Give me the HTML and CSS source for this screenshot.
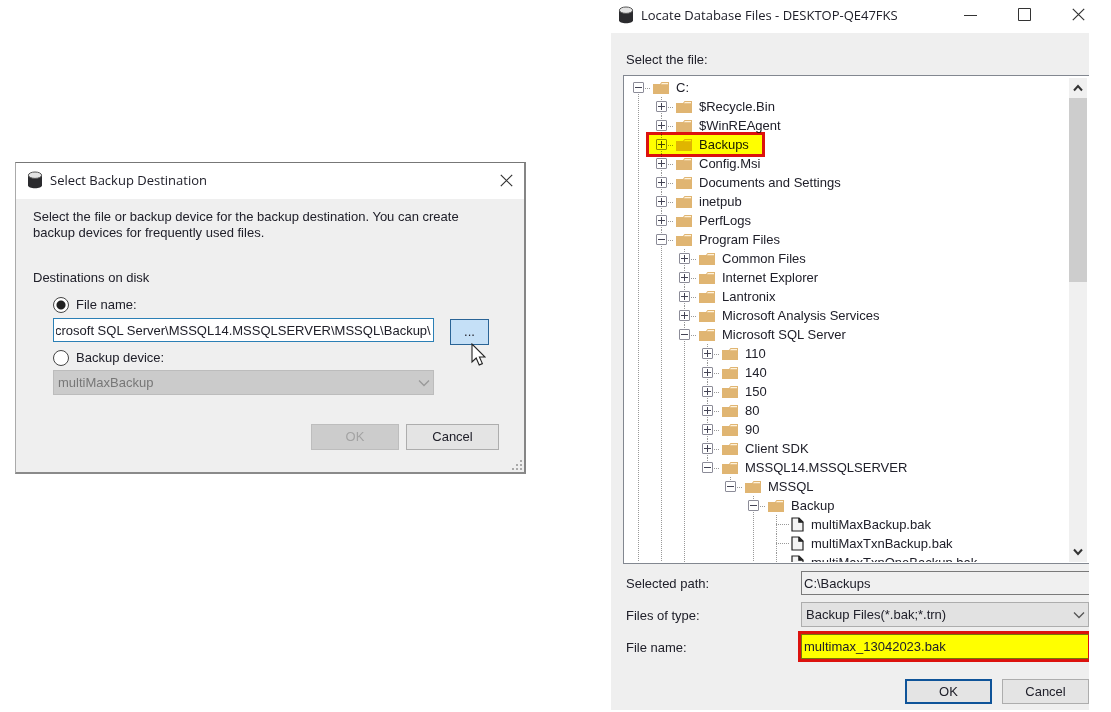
FILE: index.html
```html
<!DOCTYPE html>
<html lang="en">
<head>
<meta charset="utf-8">
<title>Select Backup Destination</title>
<link rel="stylesheet" href="styles.css">
</head>
<body>
<svg class="defs" aria-hidden="true">
  <symbol id="db" viewBox="0 0 16 18">
    <path d="M1 4v10.500c0 1.600 3.100 2.800 7 2.800s7-1.200 7-2.800V4z" fill="#2b2b2e"/>
    <ellipse cx="8" cy="4.200" rx="6.600" ry="3.200" fill="#e4e4e4" stroke="#555" stroke-width="1"/>
  </symbol>
  <symbol id="folder" viewBox="0 0 16 14">
    <path d="M0 3h7L8.500 1H16v12H0z" fill="#e0b572"/>
    <path d="M8.800 2H15v1.200H8z" fill="#fff3dc"/>
  </symbol>
  <symbol id="file" viewBox="0 0 13 15">
    <path d="M1 1h7l4 4v9H1z" fill="#f4f4f4" stroke="#222" stroke-width="1.200"/>
    <path d="M7.500 1v4.500H12z" fill="#222" stroke="#222" stroke-width=".6"/>
  </symbol>
  <symbol id="close" viewBox="0 0 13 13">
    <path d="M.8.8l11.400 11.400M12.200.8L.8 12.200" fill="none" stroke="#333" stroke-width="1.200"/>
  </symbol>
  <symbol id="chevron" viewBox="0 0 12 8">
    <path d="M1 1.500l5 5 5-5" fill="none" stroke="currentColor" stroke-width="1.300"/>
  </symbol>
  <symbol id="arrow" viewBox="0 0 10 8">
    <path d="M1 6.500l4-4.500 4 4.500" fill="none" stroke="#333" stroke-width="2"/>
  </symbol>
</svg>

<main class="stage">
  <section class="dialog dialog-backup" aria-labelledby="backup-title">
    <header class="titlebar">
      <svg class="app-icon"><use href="#db"/></svg>
      <h1 class="title" id="backup-title">Select Backup Destination</h1>
      <button class="winbtn" type="button" aria-label="Close"><svg class="x-icon"><use href="#close"/></svg></button>
    </header>
    <form class="backup-body">
      <p class="intro">Select the file or backup device for the backup destination. You can create<br>backup devices for frequently used files.</p>
      <h2 class="group-title">Destinations on disk</h2>
      <div class="dest">
        <label class="choice"><input class="radio" type="radio" name="dest" checked>File name:</label>
        <input class="field path" id="path" type="text" aria-label="File name" value="crosoft SQL Server\MSSQL14.MSSQLSERVER\MSSQL\Backup\">
        <div class="browse-wrap">
          <button class="btn browse" type="button" aria-label="Browse">...</button>
          <svg class="cursor" viewBox="0 0 15 23" aria-hidden="true"><path d="M1 1v18l4.200-4 3 7 3.200-1.400-3-6.600H14z" fill="#fff" stroke="#222" stroke-width="1.100"/></svg>
        </div>
        <label class="choice second"><input class="radio" type="radio" name="dest">Backup device:</label>
        <div class="combo device">
          <select class="select" aria-label="Backup device" disabled><option>multiMaxBackup</option></select>
          <svg class="combo-arrow"><use href="#chevron"/></svg>
        </div>
      </div>
      <div class="actions backup-actions">
        <button class="btn ok" type="button" disabled>OK</button>
        <button class="btn cancel" type="button">Cancel</button>
      </div>
      <svg class="grip" viewBox="0 0 10 10" aria-hidden="true"><path d="M8 0h2v2H8zM4 4h2v2H4zM8 4h2v2H8zM0 8h2v2H0zM4 8h2v2H4zM8 8h2v2H8z" fill="#aaa"/></svg>
    </form>
  </section>

  <section class="dialog dialog-locate" aria-labelledby="locate-title">
    <header class="titlebar">
      <svg class="app-icon"><use href="#db"/></svg>
      <h1 class="title" id="locate-title">Locate Database Files - DESKTOP-QE47FKS</h1>
      <button class="winbtn" type="button" aria-label="Minimize"><svg class="x-icon" viewBox="0 0 13 13"><path d="M0 7.500h13" stroke="#333"/></svg></button>
      <button class="winbtn" type="button" aria-label="Maximize"><svg class="x-icon" viewBox="0 0 13 13"><path d="M.5.5h12v12H.5z" fill="none" stroke="#333"/></svg></button>
      <button class="winbtn" type="button" aria-label="Close"><svg class="x-icon"><use href="#close"/></svg></button>
    </header>
    <form class="locate-body">
      <h2 class="tree-label" id="tree-label">Select the file:</h2>
      <div class="tree-box">
        <ul class="tree root" aria-labelledby="tree-label">
          <li class="node"><div class="row"><button class="toggle open" type="button" aria-label="Collapse C:"></button><svg class="folder"><use href="#folder"/></svg>C:</div>
            <ul class="tree">
              <li class="node"><div class="row"><button class="toggle" type="button" aria-label="Expand $Recycle.Bin"></button><svg class="folder"><use href="#folder"/></svg>$Recycle.Bin</div></li>
              <li class="node"><div class="row"><button class="toggle" type="button" aria-label="Expand $WinREAgent"></button><svg class="folder"><use href="#folder"/></svg>$WinREAgent</div></li>
              <li class="node"><div class="row marked"><button class="toggle" type="button" aria-label="Expand Backups"></button><svg class="folder"><use href="#folder"/></svg>Backups</div></li>
              <li class="node"><div class="row"><button class="toggle" type="button" aria-label="Expand Config.Msi"></button><svg class="folder"><use href="#folder"/></svg>Config.Msi</div></li>
              <li class="node"><div class="row"><button class="toggle" type="button" aria-label="Expand Documents and Settings"></button><svg class="folder"><use href="#folder"/></svg>Documents and Settings</div></li>
              <li class="node"><div class="row"><button class="toggle" type="button" aria-label="Expand inetpub"></button><svg class="folder"><use href="#folder"/></svg>inetpub</div></li>
              <li class="node"><div class="row"><button class="toggle" type="button" aria-label="Expand PerfLogs"></button><svg class="folder"><use href="#folder"/></svg>PerfLogs</div></li>
              <li class="node"><div class="row"><button class="toggle open" type="button" aria-label="Collapse Program Files"></button><svg class="folder"><use href="#folder"/></svg>Program Files</div>
                <ul class="tree">
                  <li class="node"><div class="row"><button class="toggle" type="button" aria-label="Expand Common Files"></button><svg class="folder"><use href="#folder"/></svg>Common Files</div></li>
                  <li class="node"><div class="row"><button class="toggle" type="button" aria-label="Expand Internet Explorer"></button><svg class="folder"><use href="#folder"/></svg>Internet Explorer</div></li>
                  <li class="node"><div class="row"><button class="toggle" type="button" aria-label="Expand Lantronix"></button><svg class="folder"><use href="#folder"/></svg>Lantronix</div></li>
                  <li class="node"><div class="row"><button class="toggle" type="button" aria-label="Expand Microsoft Analysis Services"></button><svg class="folder"><use href="#folder"/></svg>Microsoft Analysis Services</div></li>
                  <li class="node"><div class="row"><button class="toggle open" type="button" aria-label="Collapse Microsoft SQL Server"></button><svg class="folder"><use href="#folder"/></svg>Microsoft SQL Server</div>
                    <ul class="tree">
                      <li class="node"><div class="row"><button class="toggle" type="button" aria-label="Expand 110"></button><svg class="folder"><use href="#folder"/></svg>110</div></li>
                      <li class="node"><div class="row"><button class="toggle" type="button" aria-label="Expand 140"></button><svg class="folder"><use href="#folder"/></svg>140</div></li>
                      <li class="node"><div class="row"><button class="toggle" type="button" aria-label="Expand 150"></button><svg class="folder"><use href="#folder"/></svg>150</div></li>
                      <li class="node"><div class="row"><button class="toggle" type="button" aria-label="Expand 80"></button><svg class="folder"><use href="#folder"/></svg>80</div></li>
                      <li class="node"><div class="row"><button class="toggle" type="button" aria-label="Expand 90"></button><svg class="folder"><use href="#folder"/></svg>90</div></li>
                      <li class="node"><div class="row"><button class="toggle" type="button" aria-label="Expand Client SDK"></button><svg class="folder"><use href="#folder"/></svg>Client SDK</div></li>
                      <li class="node end"><div class="row"><button class="toggle open" type="button" aria-label="Collapse MSSQL14.MSSQLSERVER"></button><svg class="folder"><use href="#folder"/></svg>MSSQL14.MSSQLSERVER</div>
                        <ul class="tree">
                          <li class="node end"><div class="row"><button class="toggle open" type="button" aria-label="Collapse MSSQL"></button><svg class="folder"><use href="#folder"/></svg>MSSQL</div>
                            <ul class="tree">
                              <li class="node"><div class="row"><button class="toggle open" type="button" aria-label="Collapse Backup"></button><svg class="folder"><use href="#folder"/></svg>Backup</div>
                                <ul class="tree">
                                  <li class="node"><div class="row leaf"><svg class="file"><use href="#file"/></svg>multiMaxBackup.bak</div></li>
                                  <li class="node"><div class="row leaf"><svg class="file"><use href="#file"/></svg>multiMaxTxnBackup.bak</div></li>
                                  <li class="node"><div class="row leaf"><svg class="file"><use href="#file"/></svg>multiMaxTxnOneBackup.bak</div></li>
                                </ul>
                              </li>
                            </ul>
                          </li>
                        </ul>
                      </li>
                    </ul>
                  </li>
                </ul>
              </li>
            </ul>
          </li>
        </ul>
        <div class="scroll">
          <button class="scroll-btn" type="button" aria-label="Scroll up"><svg class="arrow"><use href="#arrow"/></svg></button>
          <div class="thumb"></div>
          <div class="track"></div>
          <button class="scroll-btn" type="button" aria-label="Scroll down"><svg class="arrow down"><use href="#arrow"/></svg></button>
        </div>
      </div>
      <div class="fields">
        <label class="field-label" for="selected">Selected path:</label>
        <input class="field bleed readonly" id="selected" type="text" value="C:\Backups" readonly>
        <label class="field-label" for="type">Files of type:</label>
        <div class="combo type">
          <select class="select" id="type"><option>Backup Files(*.bak;*.trn)</option></select>
          <svg class="combo-arrow"><use href="#chevron"/></svg>
        </div>
        <label class="field-label" for="name">File name:</label>
        <input class="field bleed hot" id="name" type="text" value="multimax_13042023.bak">
      </div>
      <div class="actions locate-actions">
        <button class="btn primary" type="button">OK</button>
        <button class="btn clipped" type="button">Cancel</button>
      </div>
    </form>
  </section>
</main>
<script src="script.js"></script>
</body>
</html>
```
FILE: styles.css
```css
* { box-sizing: border-box; }
body {
  margin: 0;
  background: #fff;
  color: #20202a;
  font: 13px/16px "Liberation Sans", Arial, sans-serif;
}
h1, h2, p, ul { margin: 0; padding: 0; font: inherit; }
button, input, select { font: inherit; color: inherit; margin: 0; }
svg { display: block; flex: none; }
.defs { position: absolute; width: 0; height: 0; }

.stage {
  display: grid;
  grid-template-columns: 511fr 478fr;
  gap: 85px;
  padding: 0 22px 0 15px;
}
.dialog { min-width: 0; background: #efefef; }
.titlebar { display: flex; align-items: center; background: #fff; }
.title {
  flex: 1;
  font: 13px/20px "Open Sans", "Noto Sans", sans-serif;
  white-space: nowrap;
}
.app-icon { width: 16px; height: 18px; margin-right: 7px; }
.winbtn { padding: 0; border: 0; background: none; }
.x-icon { width: 13px; height: 13px; }

.btn {
  height: 26px;
  padding: 0;
  border: 1px solid #adadad;
  background: #e4e4e4;
  text-align: center;
}
.btn:disabled { background: #ccc; border-color: #bdbdbd; color: #a3a3a3; }
.field {
  width: 100%;
  min-width: 0;
  height: 24px;
  padding: 0 2px;
  border: 1px solid #7a7a7a;
  border-radius: 0;
  background: #fff;
  outline: 0;
}
.combo { position: relative; min-width: 0; }
.select {
  display: block;
  width: 100%;
  height: 25px;
  padding: 0 24px 0 4px;
  border: 1px solid #adadad;
  border-radius: 0;
  background: #e2e2e2;
  appearance: none;
}
.select:disabled { background: #cbcbcb; border-color: #bcbcbc; color: #777; opacity: 1; }
.combo-arrow {
  position: absolute;
  right: 4px;
  top: 9px;
  width: 12px;
  height: 8px;
  color: #555;
  pointer-events: none;
}
.actions { display: flex; justify-content: flex-end; }

/* Backup destination dialog */
.dialog-backup {
  align-self: start;
  margin-top: 162px;
  border: 1px solid #777;
  border-left-color: #aaa;
  border-right: 2px solid #858585;
  border-bottom: 2px solid #8a8a8a;
}
.dialog-backup .titlebar { height: 36px; padding: 0 11px 2px; }
.backup-body { position: relative; padding: 10px 25px 22px 17px; }
.group-title { margin-top: 29px; }
.dest {
  display: grid;
  grid-template-columns: 1fr 39px;
  column-gap: 16px;
  padding: 11px 10px 0 20px;
}
.choice { grid-column: 1 / -1; display: flex; align-items: center; gap: 7px; height: 16px; }
.second { margin-top: 8px; }
.radio {
  appearance: none;
  width: 16px;
  height: 16px;
  border: 1px solid #444;
  border-radius: 50%;
  background: #fff;
}
.radio:checked { background: radial-gradient(circle, #222 4px, #fff 5px); }
.path { margin-top: 5px; border-color: #2b7fb5; text-align: right; }
.browse-wrap { position: relative; padding-top: 6px; height: 26px; }
.browse {
  display: block;
  width: 100%;
  border-color: #2a6496;
  background: #c5e0f7;
}
.cursor { position: absolute; left: 21px; top: 30px; width: 15px; height: 23px; }
.device { margin-top: 4px; }
.device .combo-arrow { color: #999; }
.backup-actions { gap: 7px; margin-top: 29px; }
.ok { width: 88px; }
.cancel { width: 93px; }
.grip { position: absolute; right: 2px; bottom: 2px; width: 10px; height: 10px; }

/* Locate files dialog */
.dialog-locate {
  display: flex;
  flex-direction: column;
  height: calc(100vh - 2px);
  min-height: 400px;
  overflow: hidden;
}
.dialog-locate .titlebar { height: 33px; padding: 0 4px 4px 7px; }
.dialog-locate .winbtn + .winbtn { margin-left: 41px; }
.locate-body { flex: 1; min-height: 0; display: flex; flex-direction: column; padding: 19px 0 6px 12px; }
.tree-label { padding-left: 3px; }
.tree-box {
  flex: 1 1 0;
  min-height: 0;
  display: flex;
  margin-top: 7px;
  padding: 2px 2px 1px 0;
  border: 1px solid #828790;
  border-right: 0;
  background: #fff;
}
.root { flex: 1; min-width: 0; overflow: hidden; padding-left: 9px; }
.tree { list-style: none; }
.tree .tree { padding-left: 23px; }
.node {
  background: repeating-linear-gradient(#999 0 1px, transparent 1px 2px) 5px 0 / 1px 100% no-repeat;
}
.root > .node { background-position: 5px 10px; }
.end { background-size: 1px 10px; }
.row {
  position: relative;
  display: flex;
  align-items: center;
  width: max-content;
  height: 19px;
  white-space: nowrap;
}
.toggle {
  width: 11px;
  height: 11px;
  padding: 0;
  border: 1px solid #8c8c98;
  border-radius: 1px;
  background:
    linear-gradient(#445, #445) 50% 50% / 7px 1px no-repeat,
    linear-gradient(#445, #445) 50% 50% / 1px 7px no-repeat,
    #fff;
}
.toggle.open { background: linear-gradient(#445, #445) 50% 50% / 7px 1px no-repeat, #fff; }
.folder {
  width: 25px;
  height: 14px;
  padding-left: 9px;
  margin-right: 7px;
  background: repeating-linear-gradient(90deg, transparent 0 1px, #999 1px 2px) 0 7px / 7px 1px no-repeat;
}
.leaf { padding-left: 5px; }
.file {
  width: 28px;
  height: 15px;
  padding-left: 15px;
  margin-right: 7px;
  background: repeating-linear-gradient(90deg, #999 0 1px, transparent 1px 2px) 0 7px / 13px 1px no-repeat;
}
.marked::after {
  content: "";
  position: absolute;
  inset: -3px -16px -3px -10px;
  border: 3px solid #dc120e;
  background: #ff0;
  mix-blend-mode: multiply;
}
.scroll { display: flex; flex-direction: column; width: 18px; background: #f0f0f0; }
.scroll-btn {
  display: grid;
  place-items: center;
  height: 20px;
  padding: 0;
  border: 0;
  background: #f0f0f0;
}
.arrow { width: 10px; height: 8px; }
.down { transform: rotate(180deg); }
.thumb { flex: 185; background: #cdcdcd; }
.track { flex: 261; }
.fields {
  display: grid;
  grid-template-columns: 175px 1fr;
  align-items: center;
  gap: 7px 0;
  margin-top: 7px;
  padding-left: 3px;
}
.field-label { padding-top: 2px; }
.bleed { border-right: 0; }
.readonly { background: #f0f0f0; }
.hot {
  height: 25px;
  border-color: #77770a;
  border-right: 1px solid #dc120e;
  background: #ff0;
  box-shadow: 0 0 0 3px #dc120e;
}
.locate-actions { gap: 10px; margin-top: 20px; }
.locate-actions .btn { width: 87px; height: 25px; }
.locate-actions .primary { border: 2px solid #0f5499; }
```
FILE: script.js
```js
// Keep the end of the long path in view.
const path = document.getElementById("path");
path.scrollLeft = path.scrollWidth;
```
